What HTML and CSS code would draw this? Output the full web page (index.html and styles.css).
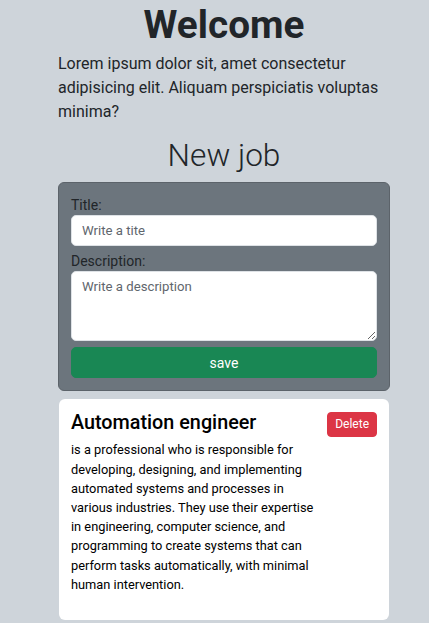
FILE: index.html
```html
<!DOCTYPE html>
<html lang="en">
<head>
<meta charset="utf-8">
<title>Jobs</title>
<link rel="stylesheet" href="styles.css">
</head>
<body>
<main class="page">
  <h1 class="welcome">Welcome</h1>
  <p class="lead">Lorem ipsum dolor sit, amet consectetur adipisicing elit. Aliquam perspiciatis voluptas minima?</p>
  <h2 class="section-title">New job</h2>
  <form class="job-form">
    <label class="field-label" for="title">Title:</label>
    <input class="field" id="title" type="text" placeholder="Write a tite">
    <label class="field-label gap-top" for="desc">Description:</label>
    <textarea class="field area" id="desc" placeholder="Write a description"></textarea>
    <button class="btn-save" type="button">save</button>
  </form>
  <article class="job-card">
    <div class="job-head">
      <h3 class="job-title">Automation engineer</h3>
      <button class="btn-delete" type="button">Delete</button>
    </div>
    <p class="job-desc">is a professional who is responsible for developing, designing, and implementing automated systems and processes in various industries. They use their expertise in engineering, computer science, and programming to create systems that can perform tasks automatically, with minimal human intervention.</p>
  </article>
</main>
</body>
</html>
```
FILE: styles.css
```css
* { box-sizing: border-box; }
html, body { margin: 0; }
body {
  background: #ced4da;
  color: #212529;
  font-family: Roboto, "Noto Sans", sans-serif;
  font-size: 16px;
}
.page {
  width: 332px;
  margin-left: 58px;
  padding-top: 2px;
  display: flex;
  flex-direction: column;
}
.welcome {
  margin: 0 0 4px;
  font-size: 38.7px;
  font-weight: 700;
  line-height: 1.2;
  text-align: center;
}
.lead {
  margin: 0;
  font-size: 16px;
  line-height: 24px;
}
.section-title {
  margin: 13px 0 7px;
  font-size: 31.6px;
  font-weight: 300;
  line-height: 1.2;
  text-align: center;
}
.job-form {
  display: flex;
  flex-direction: column;
  background: #6c757d;
  border: 1px solid #5c636a;
  border-radius: 6px;
  padding: 12px;
  margin: 0;
}
.field-label {
  font-size: 14px;
  line-height: 20px;
  color: #212529;
}
.gap-top { margin-top: 5px; }
.field {
  display: block;
  width: 100%;
  height: 31px;
  padding: 4px 10px;
  font-family: Roboto, "Noto Sans", sans-serif;
  font-size: 13.2px;
  line-height: 21px;
  color: #212529;
  background: #fff;
  border: 1px solid #dee2e6;
  border-radius: 5px;
  margin: 0;
  outline: none;
}
.field::placeholder { color: #5f666d; opacity: 1; }
.area {
  height: 70px;
  resize: vertical;
}
.btn-save {
  margin-top: 6px;
  height: 31px;
  border: 1px solid #198754;
  border-radius: 5px;
  background: #198754;
  color: #fff;
  font-family: Roboto, "Noto Sans", sans-serif;
  font-size: 14px;
  line-height: 20px;
}
.job-card {
  margin: 8px 1px 0;
  background: #fff;
  border-radius: 6px;
  padding: 12px;
}
.job-head {
  display: flex;
  justify-content: space-between;
  align-items: flex-start;
  margin-bottom: 3px;
}
.job-title {
  margin: 0;
  font-size: 19.8px;
  font-weight: 500;
  line-height: 1.2;
  color: #000;
}
.btn-delete {
  margin-top: 1px;
  height: 25px;
  padding: 2px 7px;
  border: 1px solid #dc3545;
  border-radius: 4px;
  background: #dc3545;
  color: #fff;
  font-family: Roboto, "Noto Sans", sans-serif;
  font-size: 12px;
  line-height: 19px;
}
.job-desc {
  width: 250px;
  margin: 0 0 14px;
  font-size: 12.8px;
  line-height: 19.2px;
  color: #000;
}
```
